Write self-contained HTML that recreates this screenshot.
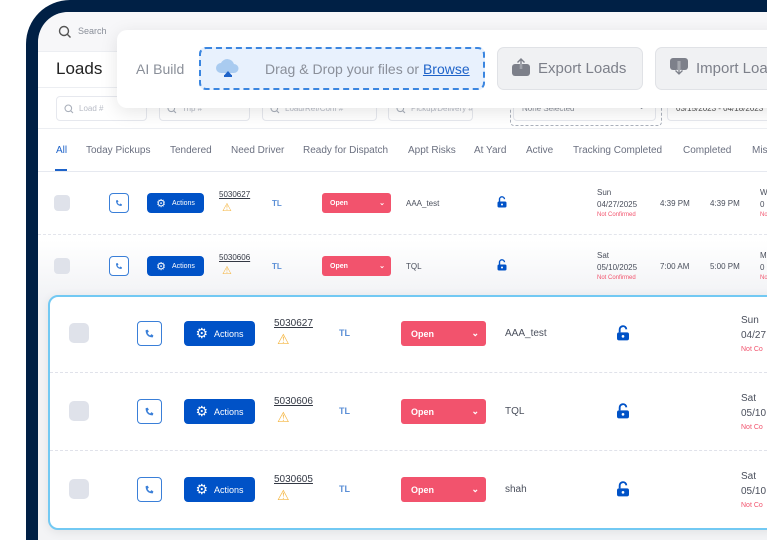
<!DOCTYPE html>
<html style="width:767px;height:540px;overflow:hidden"><head><style>
*{margin:0;padding:0;box-sizing:border-box}
body{width:767px;height:540px;overflow:hidden;background:#fff;font-family:"Liberation Sans",sans-serif;position:relative}
.a{position:absolute}
.frame{left:26px;top:0;width:741px;height:540px;background:#002045;border-radius:44px 0 0 0}
.inner{left:38px;top:12px;width:729px;height:528px;background:#fff;border-radius:32px 0 0 0;overflow:hidden}
.t{position:absolute;white-space:nowrap}
.inp{position:absolute;top:96px;height:25px;border:1px solid #e6e8ee;border-radius:4px;background:#fff;font-size:8px;color:#b8bcc6;line-height:23px;padding-left:22px;white-space:nowrap;overflow:hidden}
.inp svg{position:absolute;left:7px;top:7px}
.cb{position:absolute;background:#dfe2ea;border-radius:4px}
.ph{position:absolute;border:1.3px solid #3a7fd8;border-radius:4px;background:#fff;display:flex;align-items:center;justify-content:center}
.act{position:absolute;background:#0052c7;border-radius:4px;color:#fff;display:flex;align-items:center;justify-content:center;gap:6px}
.open{position:absolute;background:#f2536d;border-radius:3px;color:#fff;font-weight:bold;display:flex;align-items:center;justify-content:space-between}
.num{position:absolute;color:#333844;text-decoration:underline}
.tl{position:absolute;color:#5b8fd6;font-weight:bold}
.g{color:#4a4f5c}
.nc{color:#f2536d}
</style></head><body>
<svg width="0" height="0" style="position:absolute"><defs>
<symbol id="lock" viewBox="0 0 12 12"><path d="M3.5 5.5V3.5a2.5 2.5 0 0 1 5 -0.3" fill="none" stroke="#0052c7" stroke-width="1.4"/><rect x="1.5" y="5.5" width="9" height="6" rx="1.5" fill="#0052c7"/><circle cx="6" cy="8.5" r="1" fill="#fff"/></symbol>
<symbol id="phone" viewBox="0 0 10 10"><path d="M8 6.5L6.5 5.5 5.5 6.5C4.5 6 4 5.5 3.5 4.5L4.5 3.5 3.5 2 2 2.5C2 6 4 8 7.5 8Z" fill="#3a7fd8"/></symbol>
<symbol id="srch" viewBox="0 0 10 10"><circle cx="4.3" cy="4.3" r="3.3" fill="none" stroke="#aab0bb" stroke-width="1.1"/><path d="M6.8 6.8L9 9" stroke="#aab0bb" stroke-width="1.1"/></symbol>
</defs></svg>
<div class="a frame"></div>
<div class="a inner"></div>
<div class="a" style="left:38px;top:12px;width:729px;height:40px;background:#f7f7f9;border-radius:30px 0 0 0"></div>
<svg class="a" style="left:58px;top:25px" width="14" height="14" viewBox="0 0 14 14"><circle cx="6" cy="6" r="4.5" fill="none" stroke="#555" stroke-width="1.4"/><path d="M9.3 9.3L12.5 12.5" stroke="#555" stroke-width="1.4"/></svg>
<div class="t" style="left:78px;top:26px;font-size:9px;color:#8a8f99">Search</div>
<div class="a" style="left:38px;top:51px;width:729px;height:1px;background:#eceef2"></div>
<div class="t" style="left:56px;top:59px;font-size:17px;color:#222">Loads</div>
<div class="a" style="left:38px;top:87px;width:729px;height:1px;background:#eceef2"></div>
<div class="inp" style="left:56px;width:91px"><svg width="10" height="10"><use href="#srch"/></svg>Load #</div>
<div class="inp" style="left:159px;width:91px"><svg width="10" height="10"><use href="#srch"/></svg>Trip #</div>
<div class="inp" style="left:262px;width:115px"><svg width="10" height="10"><use href="#srch"/></svg>Load/Ref/Conf #</div>
<div class="inp" style="left:388px;width:85px"><svg width="10" height="10"><use href="#srch"/></svg>Pickup/Delivery #</div>
<div class="a" style="left:510px;top:94px;width:152px;height:32px;border:1px dashed #aab0bb;border-radius:4px"></div>
<div class="inp" style="left:513px;width:143px;padding-left:8px;color:#8a8f99">None Selected<span style="position:absolute;right:10px;top:-2px">⌄</span></div>
<div class="inp" style="left:667px;width:110px;padding-left:8px;color:#555">03/15/2023 - 04/18/2023</div>
<div class="a" style="left:38px;top:128px;width:729px;height:1px;background:#eceef2"></div>
<div class="t" style="left:56px;top:145px;font-size:10px;color:#1e63c9">All</div>
<div class="a" style="left:55px;top:169px;width:12px;height:2px;background:#1e63c9"></div>
<div class="t" style="left:86px;top:145px;font-size:10px;color:#6b7080">Today Pickups</div>
<div class="t" style="left:170px;top:145px;font-size:10px;color:#6b7080">Tendered</div>
<div class="t" style="left:231px;top:145px;font-size:10px;color:#6b7080">Need Driver</div>
<div class="t" style="left:303px;top:145px;font-size:10px;color:#6b7080">Ready for Dispatch</div>
<div class="t" style="left:408px;top:145px;font-size:10px;color:#6b7080">Appt Risks</div>
<div class="t" style="left:474px;top:145px;font-size:10px;color:#6b7080">At Yard</div>
<div class="t" style="left:526px;top:145px;font-size:10px;color:#6b7080">Active</div>
<div class="t" style="left:573px;top:145px;font-size:10px;color:#6b7080">Tracking Completed</div>
<div class="t" style="left:683px;top:145px;font-size:10px;color:#6b7080">Completed</div>
<div class="t" style="left:752px;top:145px;font-size:10px;color:#6b7080">Mis</div>
<div class="a" style="left:38px;top:171px;width:729px;height:1px;background:#e6e9f0"></div>

<div class="a" style="left:38px;top:234px;width:729px;border-top:1px dashed #e3e5ec"></div>
<div class="a" style="left:38px;top:240px;width:729px;height:60px;background:linear-gradient(#fff,#f1f2f5)"></div>
<div class="cb" style="left:54px;top:195px;width:16px;height:16px"></div>
<div class="ph" style="left:109px;top:193px;width:20px;height:20px"><svg width="10" height="10"><use href="#phone"/></svg></div>
<div class="act" style="left:147px;top:193px;width:57px;height:20px;font-size:7px"><span style="font-size:11px">⚙</span>Actions</div>
<div class="num" style="left:219px;top:190px;font-size:8px">5030627</div>
<div class="t" style="left:222px;top:201px;font-size:11px;color:#f5b540">⚠</div>
<div class="tl" style="left:272px;top:199px;font-size:8px">TL</div>
<div class="open" style="left:322px;top:193px;width:69px;height:20px;font-size:7px;padding:0 6px 0 8px">Open<span>⌄</span></div>
<div class="t g" style="left:406px;top:199px;font-size:8px">AAA_test</div>
<svg class="a" style="left:496px;top:196px" width="12" height="12"><use href="#lock"/></svg>
<div class="t g" style="left:597px;top:187px;font-size:8px;line-height:12px">Sun<br>04/27/2025</div>
<div class="t nc" style="left:597px;top:212px;font-size:6px">Not Confirmed</div>
<div class="t g" style="left:660px;top:199px;font-size:8px">4:39 PM</div>
<div class="t g" style="left:710px;top:199px;font-size:8px">4:39 PM</div>
<div class="t g" style="left:760px;top:187px;font-size:8px;line-height:12px">W<br>0</div>
<div class="t nc" style="left:760px;top:212px;font-size:6px">No</div>
<div class="cb" style="left:54px;top:258px;width:16px;height:16px"></div>
<div class="ph" style="left:109px;top:256px;width:20px;height:20px"><svg width="10" height="10"><use href="#phone"/></svg></div>
<div class="act" style="left:147px;top:256px;width:57px;height:20px;font-size:7px"><span style="font-size:11px">⚙</span>Actions</div>
<div class="num" style="left:219px;top:253px;font-size:8px">5030606</div>
<div class="t" style="left:222px;top:264px;font-size:11px;color:#f5b540">⚠</div>
<div class="tl" style="left:272px;top:262px;font-size:8px">TL</div>
<div class="open" style="left:322px;top:256px;width:69px;height:20px;font-size:7px;padding:0 6px 0 8px">Open<span>⌄</span></div>
<div class="t g" style="left:406px;top:262px;font-size:8px">TQL</div>
<svg class="a" style="left:496px;top:259px" width="12" height="12"><use href="#lock"/></svg>
<div class="t g" style="left:597px;top:250px;font-size:8px;line-height:12px">Sat<br>05/10/2025</div>
<div class="t nc" style="left:597px;top:275px;font-size:6px">Not Confirmed</div>
<div class="t g" style="left:660px;top:262px;font-size:8px">7:00 AM</div>
<div class="t g" style="left:710px;top:262px;font-size:8px">5:00 PM</div>
<div class="t g" style="left:760px;top:250px;font-size:8px;line-height:12px">M<br>0</div>
<div class="t nc" style="left:760px;top:275px;font-size:6px">No</div>
<div class="a" style="left:38px;top:300px;width:729px;height:240px;background:#f3f4f6"></div>

<div class="a" style="left:48px;top:295px;width:730px;height:235px;background:#fff;border:2px solid #72c9f3;border-radius:10px;box-shadow:0 2px 10px rgba(0,0,0,.08)"></div>
<div class="a" style="left:50px;top:372px;width:717px;border-top:1px dashed #e0e2ea"></div>
<div class="a" style="left:50px;top:450px;width:717px;border-top:1px dashed #e0e2ea"></div>

<div class="cb" style="left:69px;top:323px;width:20px;height:20px;border-radius:5px"></div>
<div class="ph" style="left:137px;top:321px;width:25px;height:25px"><svg width="13" height="13"><use href="#phone"/></svg></div>
<div class="act" style="left:184px;top:321px;width:71px;height:25px;font-size:9px"><span style="font-size:14px">⚙</span>Actions</div>
<div class="num" style="left:274px;top:318px;font-size:10px">5030627</div>
<div class="t" style="left:277px;top:331px;font-size:14px;color:#f5b540">⚠</div>
<div class="tl" style="left:339px;top:328px;font-size:9px">TL</div>
<div class="open" style="left:401px;top:321px;width:85px;height:25px;font-size:9px;padding:0 7px 0 10px">Open<span>⌄</span></div>
<div class="t g" style="left:505px;top:328px;font-size:10px">AAA_test</div>
<svg class="a" style="left:615px;top:325px" width="16" height="16"><use href="#lock"/></svg>
<div class="t g" style="left:741px;top:313px;font-size:10px;line-height:15px">Sun<br>04/27</div>
<div class="t nc" style="left:741px;top:346px;font-size:7px">Not Co</div>

<div class="cb" style="left:69px;top:401px;width:20px;height:20px;border-radius:5px"></div>
<div class="ph" style="left:137px;top:399px;width:25px;height:25px"><svg width="13" height="13"><use href="#phone"/></svg></div>
<div class="act" style="left:184px;top:399px;width:71px;height:25px;font-size:9px"><span style="font-size:14px">⚙</span>Actions</div>
<div class="num" style="left:274px;top:396px;font-size:10px">5030606</div>
<div class="t" style="left:277px;top:409px;font-size:14px;color:#f5b540">⚠</div>
<div class="tl" style="left:339px;top:406px;font-size:9px">TL</div>
<div class="open" style="left:401px;top:399px;width:85px;height:25px;font-size:9px;padding:0 7px 0 10px">Open<span>⌄</span></div>
<div class="t g" style="left:505px;top:406px;font-size:10px">TQL</div>
<svg class="a" style="left:615px;top:403px" width="16" height="16"><use href="#lock"/></svg>
<div class="t g" style="left:741px;top:391px;font-size:10px;line-height:15px">Sat<br>05/10</div>
<div class="t nc" style="left:741px;top:424px;font-size:7px">Not Co</div>

<div class="cb" style="left:69px;top:479px;width:20px;height:20px;border-radius:5px"></div>
<div class="ph" style="left:137px;top:477px;width:25px;height:25px"><svg width="13" height="13"><use href="#phone"/></svg></div>
<div class="act" style="left:184px;top:477px;width:71px;height:25px;font-size:9px"><span style="font-size:14px">⚙</span>Actions</div>
<div class="num" style="left:274px;top:474px;font-size:10px">5030605</div>
<div class="t" style="left:277px;top:487px;font-size:14px;color:#f5b540">⚠</div>
<div class="tl" style="left:339px;top:484px;font-size:9px">TL</div>
<div class="open" style="left:401px;top:477px;width:85px;height:25px;font-size:9px;padding:0 7px 0 10px">Open<span>⌄</span></div>
<div class="t g" style="left:505px;top:484px;font-size:10px">shah</div>
<svg class="a" style="left:615px;top:481px" width="16" height="16"><use href="#lock"/></svg>
<div class="t g" style="left:741px;top:469px;font-size:10px;line-height:15px">Sat<br>05/10</div>
<div class="t nc" style="left:741px;top:502px;font-size:7px">Not Co</div>

<div class="a" style="left:117px;top:30px;width:680px;height:78px;background:#fff;border-radius:10px;box-shadow:0 4px 18px rgba(0,0,0,.10)"></div>
<div class="t" style="left:136px;top:61px;font-size:14px;color:#8a8f99">AI Build</div>
<div class="a" style="left:199px;top:47px;width:286px;height:43px;background:#e8f1fd;border:2px dashed #3b86e0;border-radius:7px"></div>
<svg class="a" style="left:215px;top:56px" width="26" height="24" viewBox="0 0 26 24"><path d="M6 17a5 5 0 0 1 0-10 7 7 0 0 1 13 1 4.5 4.5 0 0 1 0 9Z" fill="#a9cbf0"/><path d="M13 15l-3.5 4h7Z" fill="#1e63c9"/><rect x="9" y="19" width="8" height="2" fill="#1e63c9"/></svg>
<div class="t" style="left:265px;top:61px;font-size:14px;color:#8a8f99">Drag &amp; Drop your files or <span style="color:#1e63c9;text-decoration:underline">Browse</span></div>
<div class="a" style="left:497px;top:47px;width:146px;height:43px;background:#f0f1f3;border:1px solid #e0e2e6;border-radius:7px"></div>
<svg class="a" style="left:511px;top:57px" width="20" height="20" viewBox="0 0 20 20"><rect x="1" y="7" width="18" height="12" rx="3" fill="#7d808a"/><path d="M10 2v10M6 6l4-4 4 4" stroke="#f0f1f3" stroke-width="2.2" fill="none"/><path d="M10 2v10M6.5 5.5L10 2l3.5 3.5" stroke="#7d808a" stroke-width="1.4" fill="none"/></svg>
<div class="t" style="left:538px;top:60px;font-size:15px;color:#7d808a">Export Loads</div>
<div class="a" style="left:655px;top:47px;width:140px;height:43px;background:#f0f1f3;border:1px solid #e0e2e6;border-radius:7px"></div>
<svg class="a" style="left:669px;top:57px" width="20" height="20" viewBox="0 0 20 20"><rect x="1" y="1" width="18" height="12" rx="3" fill="#7d808a"/><path d="M10 4v13M6.5 13.5L10 17l3.5-3.5" stroke="#f0f1f3" stroke-width="2.4" fill="none"/><path d="M10 4v13M6.5 13.5L10 17l3.5-3.5" stroke="#7d808a" stroke-width="1.3" fill="none"/></svg>
<div class="t" style="left:696px;top:60px;font-size:15px;color:#7d808a">Import Loads</div>
</body></html>
